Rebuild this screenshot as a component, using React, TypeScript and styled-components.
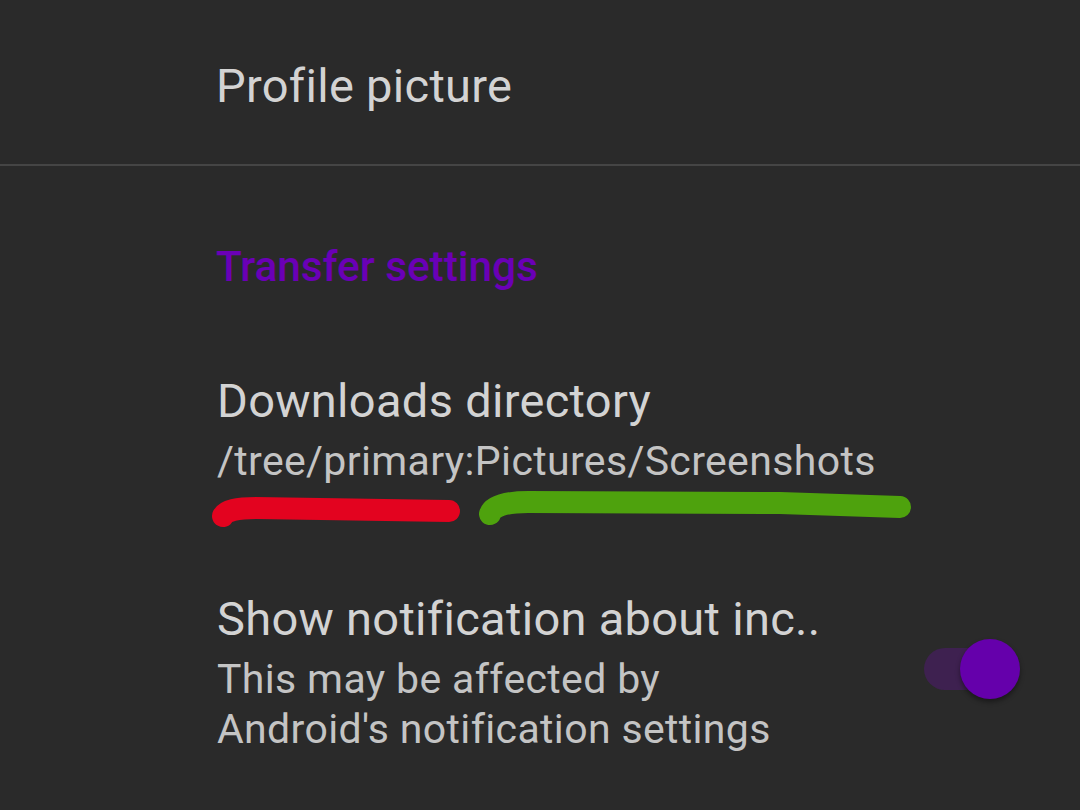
import React from "react";
import styled, { createGlobalStyle } from "styled-components";

const Global = createGlobalStyle`
  html, body { margin: 0; padding: 0; background: #2a2a2a; }
  body { font-family: Roboto, "Noto Sans", sans-serif; -webkit-font-smoothing: antialiased; }
`;

const Page = styled.div`
  position: relative;
  width: 1080px;
  height: 810px;
  overflow: hidden;
  background: #2a2a2a;
  display: flex;
  flex-direction: column;
`;

const TopRow = styled.div`
  padding: 59px 0 51px 216px;
`;

const Divider = styled.div`
  height: 2px;
  background: #454545;
`;

const Category = styled.div`
  margin: 75px 0 0 216px;
  font-size: 42.3px;
  line-height: 52px;
  font-weight: 500;
  color: #6a00b6;
`;

const Pref = styled.div<{ $gap: number }>`
  margin-top: ${(p) => p.$gap}px;
  padding-left: 217px;
  padding-right: 58px;
  display: flex;
  align-items: center;
`;

const TextCol = styled.div`
  flex: 1;
  display: flex;
  flex-direction: column;
  gap: 8px;
  min-width: 0;
`;

const Title = styled.div`
  font-size: 47px;
  line-height: 54px;
  letter-spacing: 0.3px;
  color: #d3d3d3;
  white-space: nowrap;
`;

const Summary = styled.div`
  font-size: 41px;
  line-height: 50px;
  letter-spacing: 0.35px;
  color: #c4c4c4;
`;

const SwitchWrap = styled.div`
  position: relative;
  width: 98px;
  height: 60px;
  margin-bottom: 9px;
  flex-shrink: 0;
`;

const Track = styled.div`
  position: absolute;
  left: 0;
  top: 9px;
  width: 90px;
  height: 42px;
  border-radius: 21px;
  background: #3e2150;
`;

const Thumb = styled.div`
  position: absolute;
  left: 36px;
  top: 0;
  width: 60px;
  height: 60px;
  border-radius: 50%;
  background: #6500ab;
  box-shadow: 0 3px 5px rgba(0, 0, 0, 0.4);
`;

const Scribbles = styled.svg`
  position: absolute;
  left: 0;
  top: 0;
  pointer-events: none;
`;

export default function App() {
  return (
    <>
      <Global />
      <Page>
        <TopRow>
          <Title>Profile picture</Title>
        </TopRow>
        <Divider />
        <Category>Transfer settings</Category>
        <Pref $gap={81}>
          <TextCol>
            <Title>Downloads directory</Title>
            <Summary>/tree/primary:Pictures/Screenshots</Summary>
          </TextCol>
        </Pref>
        <Pref $gap={106}>
          <TextCol>
            <Title>Show notification about inc..</Title>
            <Summary>
              This may be affected by
              <br />
              Android's notification settings
            </Summary>
          </TextCol>
          <SwitchWrap>
            <Track />
            <Thumb />
          </SwitchWrap>
        </Pref>
        <Scribbles width="1080" height="810" viewBox="0 0 1080 810">
          <path
            d="M223 516 Q227 508 256 508 L449 511"
            fill="none"
            stroke="#e3031f"
            strokeWidth="22"
            strokeLinecap="round"
            strokeLinejoin="round"
          />
          <path
            d="M490 514 Q494 502 528 502 L780 503 L900 507"
            fill="none"
            stroke="#4ea20d"
            strokeWidth="22"
            strokeLinecap="round"
            strokeLinejoin="round"
          />
        </Scribbles>
      </Page>
    </>
  );
}
